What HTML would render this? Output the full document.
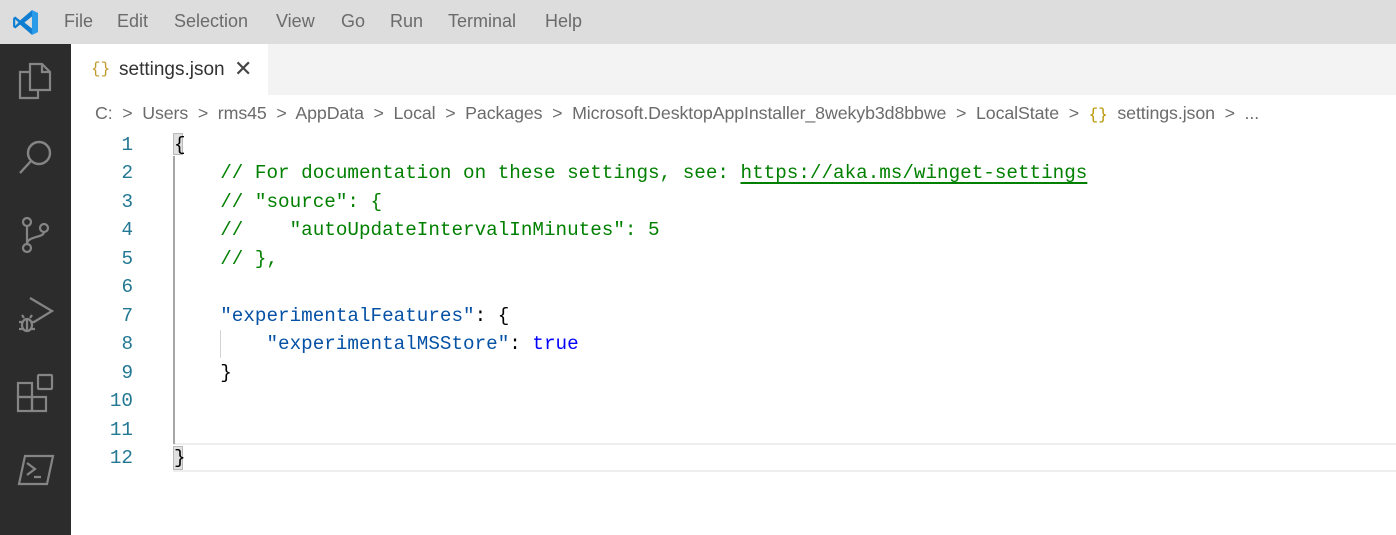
<!DOCTYPE html>
<html><head><meta charset="utf-8"><style>
body{margin:0;width:1396px;height:535px;overflow:hidden;background:#fff;font-family:"Liberation Sans",sans-serif;position:relative}
.title{position:absolute;left:0;top:0;width:1396px;height:44px;background:#dddddd}
.menu{position:absolute;top:11px;font-size:18px;color:#6b6b6b}
.act{position:absolute;left:0;top:44px;width:71px;height:491px;background:#2c2c2c}
.tabs{position:absolute;left:71px;top:44px;width:1325px;height:51px;background:#f3f3f3}
.tab{position:absolute;left:0;top:0;width:197px;height:51px;background:#fff}
.bc{position:absolute;left:95px;top:103px;font-size:17.8px;color:#6b6b6b;white-space:pre;letter-spacing:-0.1px}
.code{position:absolute;top:131px;font-family:"Liberation Mono",monospace;font-size:19.27px;line-height:28.45px;white-space:pre}
.ln{left:71px;width:62px;text-align:right;color:#237893}
.src{left:174px;color:#000}
.c{color:#008000}.k{color:#0451a5}.b{color:#0000ff}
.br{color:#b89500}
</style></head><body>
<div class="title">
<svg style="position:absolute;left:12px;top:9px" width="27" height="27" viewBox="0 0 100 100"><path d="M74 4 L96 15 V85 L74 96 L30 58 L12 72 L4 66 V34 L12 28 L30 42 Z M74 28 L46 50 L74 72 Z M12 38 V62 L24 50 Z" fill="#0f7ed1" fill-rule="evenodd"/><path d="M74 4 L96 15 V85 L74 96 Z" fill="#2a9be8"/></svg>
<span class="menu" style="left:64px">File</span>
<span class="menu" style="left:117px">Edit</span>
<span class="menu" style="left:174px">Selection</span>
<span class="menu" style="left:276px">View</span>
<span class="menu" style="left:341px">Go</span>
<span class="menu" style="left:390px">Run</span>
<span class="menu" style="left:448px">Terminal</span>
<span class="menu" style="left:545px">Help</span>
</div>
<div class="act">
<svg style="position:absolute;left:16px;top:16px" width="38" height="40" viewBox="0 0 38 40" fill="none" stroke="#858585" stroke-width="2.2"><path d="M14 4 H26 L34 12 V30 H14 Z M26 4 V12 H34"/><path d="M14 12 H4 V38 H22 V30"/></svg>
<svg style="position:absolute;left:16px;top:92px" width="40" height="40" viewBox="0 0 40 40" fill="none" stroke="#858585" stroke-width="2.4"><circle cx="23" cy="17" r="11"/><path d="M15 25 L4 37"/></svg>
<svg style="position:absolute;left:18px;top:170px" width="34" height="40" viewBox="0 0 34 40" fill="none" stroke="#858585" stroke-width="2.2"><circle cx="9" cy="8" r="4"/><circle cx="9" cy="34" r="4"/><circle cx="26" cy="14" r="4"/><path d="M9 12 V30 M26 18 C26 24 9 22 9 30"/></svg>
<svg style="position:absolute;left:16px;top:250px" width="40" height="40" viewBox="0 0 40 40" fill="none" stroke="#858585" stroke-width="2.2"><path d="M14 4 L36 17 L18 28"/><ellipse cx="11" cy="31" rx="5" ry="6"/><path d="M3 28 H7 M15 28 H19 M3 35 H7 M15 35 H19 M8 24 L6 21 M14 24 L16 21 M11 26 V36"/></svg>
<svg style="position:absolute;left:16px;top:329px" width="40" height="40" viewBox="0 0 40 40" fill="none" stroke="#858585" stroke-width="2.2"><rect x="2" y="10" width="14" height="14"/><rect x="2" y="24" width="14" height="14"/><rect x="16" y="24" width="14" height="14"/><rect x="22" y="2" width="14" height="14" rx="1"/></svg>
<svg style="position:absolute;left:17px;top:410px" width="38" height="32" viewBox="0 0 38 32" fill="none" stroke="#858585" stroke-width="2.2"><path d="M8 2 H36 L30 30 H2 Z"/><path d="M10 9 L18 15 L10 21 M17 23 H24"/></svg>
</div>
<div class="tabs"><div class="tab">
<span style="position:absolute;left:20px;top:16px;font-size:16px;color:#c29b2e;font-family:'Liberation Mono',monospace">{}</span>
<span style="position:absolute;left:48px;top:15px;font-size:19px;color:#333">settings.json</span>
<span style="position:absolute;left:163px;top:12px;font-size:22px;color:#444">✕</span>
</div></div>
<div class="bc">C:  &gt;  Users  &gt;  rms45  &gt;  AppData  &gt;  Local  &gt;  Packages  &gt;  Microsoft.DesktopAppInstaller_8wekyb3d8bbwe  &gt;  LocalState  &gt;  <span class="br" style="font-family:'Liberation Mono',monospace;font-size:16px">{}</span>  settings.json  &gt;  ...</div>
<div style="position:absolute;left:173px;top:443px;width:1223px;height:25px;border-top:2px solid #eeeeee;border-bottom:2px solid #eeeeee"></div>
<div style="position:absolute;left:173px;top:156px;width:2px;height:288px;background:#a6a6a6"></div>
<div style="position:absolute;left:173px;top:133px;width:10px;height:22px;background:#e0e0e0;border:1px solid #b8b8b8;box-sizing:border-box"></div>
<div style="position:absolute;left:173px;top:446px;width:10px;height:24px;background:#e0e0e0;border:1px solid #b8b8b8;box-sizing:border-box"></div>
<div style="position:absolute;left:220px;top:330px;width:1px;height:28px;background:#d3d3d3"></div>
<div class="code ln">1
2
3
4
5
6
7
8
9
10
11
12</div>
<div class="code src">{
    <span class="c">// For documentation on these settings, see: <span style="text-decoration:underline;text-underline-offset:4px;text-decoration-thickness:2px">https://aka.ms/winget-settings</span></span>
    <span class="c">// "source": {</span>
    <span class="c">//    "autoUpdateIntervalInMinutes": 5</span>
    <span class="c">// },</span>

    <span class="k">"experimentalFeatures"</span>: {
        <span class="k">"experimentalMSStore"</span>: <span class="b">true</span>
    }


}</div>
</body></html>
